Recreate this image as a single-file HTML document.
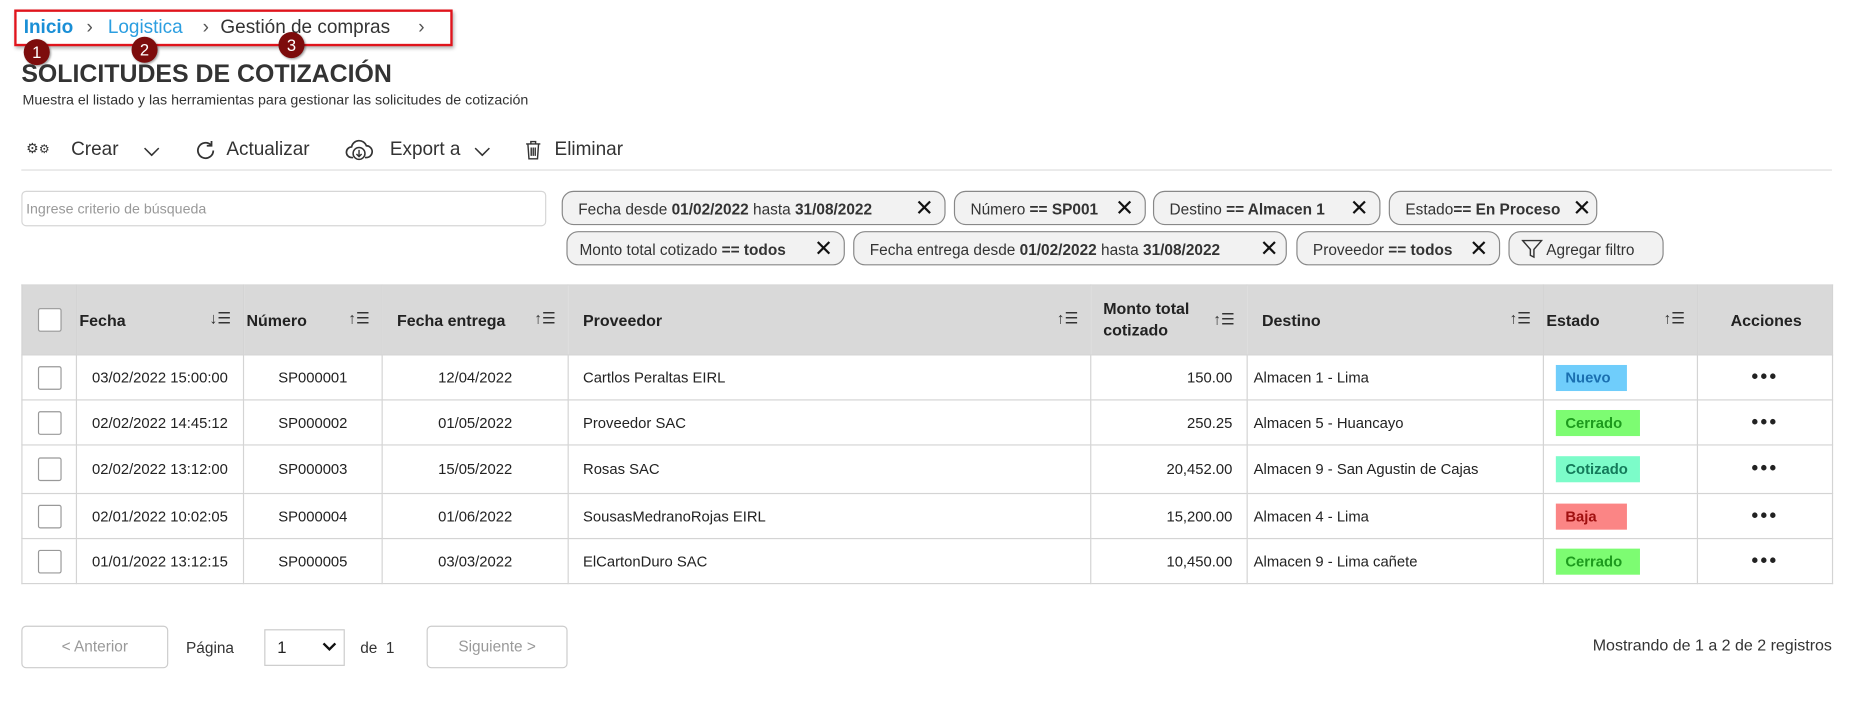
<!DOCTYPE html>
<html><head><meta charset="utf-8"><style>
html,body{margin:0;padding:0;background:#fff;width:1858px;height:704px;overflow:hidden}
#w{position:absolute;left:0;top:0;width:1568px;height:594px;transform:scale(1.18495);transform-origin:0 0;font-family:"Liberation Sans",sans-serif;color:#222}
.a{position:absolute;white-space:nowrap}
.circ{position:absolute;width:22px;height:22px;border-radius:50%;background:#7d0c0c;color:#fff;font-size:14px;text-align:center;line-height:22px;box-shadow:1px 1px 2px rgba(0,0,0,.4)}
.chip{position:absolute;height:29px;border:1px solid #888;border-radius:10px;background:#f2f2f2;font-size:13px;line-height:29px;padding-left:13px;box-sizing:border-box;color:#333}
.chip .x{position:absolute;right:9px;top:0;font-size:19px;color:#111}
table{position:absolute;left:18px;top:240px;border-collapse:collapse;width:1528px;font-size:12.5px;table-layout:fixed}
td,th{border:1.5px solid #d4d4d4;padding:0;overflow:hidden;white-space:nowrap}
th{background:#d9d9d9;height:58px;font-size:13.5px;text-align:left;position:relative;padding-left:2px}
td{height:37px}
.s{position:absolute;right:10px;top:20px;font-size:13px;font-weight:normal;color:#333}
.cb{width:18px;height:18px;border:1px solid #999;background:#fff;margin:auto;border-radius:2px}
.badge{display:inline-block;height:22px;line-height:22px;font-weight:bold;font-size:12.5px;padding-left:8px;box-sizing:border-box}
.btn{position:absolute;border:1px solid #ccc;border-radius:4px;height:36px;box-sizing:border-box;color:#999;font-size:13px;text-align:center;line-height:34px}
.d{text-align:center;font-size:16px;font-weight:bold;letter-spacing:2px}
</style></head><body><div id="w">
<div style="position:absolute;left:12px;top:8px;width:370px;height:31px;border:2px solid #e0141c;box-shadow:1px 2px 3px rgba(0,0,0,.3);box-sizing:border-box"></div>
<div class="a" style="left:20px;top:15px;font-size:16px"><b style="color:#1a8fd6">Inicio</b></div>
<div class="a" style="left:73px;top:15px;font-size:16px;color:#555">›</div>
<div class="a" style="left:91px;top:15px;font-size:16px;color:#2b9ee0">Logistica</div>
<div class="a" style="left:171px;top:15px;font-size:16px;color:#555">›</div>
<div class="a" style="left:186px;top:15px;font-size:16px;color:#333">Gestión de compras</div>
<div class="a" style="left:353px;top:15px;font-size:16px;color:#555">›</div>
<div class="circ" style="left:20px;top:33px">1</div>
<div class="circ" style="left:111px;top:31px">2</div>
<div class="circ" style="left:235px;top:27px">3</div>
<div class="a" style="left:18px;top:51px;font-size:21px;font-weight:bold;color:#333">SOLICITUDES DE COTIZACIÓN</div>
<div class="a" style="left:19px;top:77px;font-size:12px;color:#333">Muestra el listado y las herramientas para gestionar las solicitudes de cotización</div>
<div class="a" style="left:22px;top:118px;font-size:12px;color:#333">⚙<span style="font-size:10px">⚙</span></div>
<div class="a" style="left:60px;top:118px;font-size:16px;color:#333">Crear</div>
<svg style="position:absolute;left:121px;top:124px" width="14" height="8" viewBox="0 0 14 8"><path d="M1 1l6 6 6-6" fill="none" stroke="#333" stroke-width="1.3"/></svg>
<svg style="position:absolute;left:164px;top:117px" width="20" height="20" viewBox="0 0 20 20"><path d="M16 10a6.5 6.5 0 1 1-2-4.7" fill="none" stroke="#333" stroke-width="1.5"/><path d="M14.5 2v4h-4" fill="none" stroke="#333" stroke-width="1.5"/></svg>
<div class="a" style="left:191px;top:118px;font-size:16px;color:#333">Actualizar</div>
<svg style="position:absolute;left:291px;top:117px" width="24" height="19" viewBox="0 0 24 19"><path d="M7 16H6a4.5 4.5 0 0 1-.3-9 6.5 6.5 0 0 1 12.5-1A5 5 0 0 1 18 16h-1" fill="none" stroke="#333" stroke-width="1.4"/><circle cx="12" cy="12.5" r="5" fill="none" stroke="#333" stroke-width="1.3"/><path d="M12 9.5v5.5M9.8 13l2.2 2.2 2.2-2.2" fill="none" stroke="#333" stroke-width="1.2"/></svg>
<div class="a" style="left:329px;top:118px;font-size:16px;color:#333">Export a</div>
<svg style="position:absolute;left:400px;top:124px" width="14" height="8" viewBox="0 0 14 8"><path d="M1 1l6 6 6-6" fill="none" stroke="#333" stroke-width="1.3"/></svg>
<svg style="position:absolute;left:443px;top:118px" width="14" height="17" viewBox="0 0 14 17"><path d="M1 3.5h12M5 3.5V1.5h4v2M2.5 3.5l.9 12.5h7.2l.9-12.5M5.3 6.5v7M7 6.5v7M8.7 6.5v7" fill="none" stroke="#333" stroke-width="1.2"/></svg>
<div class="a" style="left:468px;top:118px;font-size:16px;color:#333">Eliminar</div>
<div style="position:absolute;left:18px;top:143px;width:1528px;height:1px;background:#ddd"></div>
<div style="position:absolute;left:18px;top:161px;width:443px;height:30px;border:1px solid #d6d6d6;border-radius:4px;box-sizing:border-box;font-size:12px;color:#999;line-height:28px;padding-left:3px">Ingrese criterio de búsqueda</div>
<div class="chip" style="left:474px;top:161px;width:324px">Fecha desde <b>01/02/2022</b> hasta <b>31/08/2022</b><span class="x">✕</span></div>
<div class="chip" style="left:805px;top:161px;width:162px">Número <b>== SP001</b><span class="x">✕</span></div>
<div class="chip" style="left:973px;top:161px;width:192px">Destino <b>== Almacen 1</b><span class="x">✕</span></div>
<div class="chip" style="left:1172px;top:161px;width:176px">Estado<b>== En Proceso</b><span class="x" style="right:4px">✕</span></div>
<div class="chip" style="left:478px;top:195px;width:235px;padding-left:10px">Monto total cotizado <b>== todos</b><span class="x">✕</span></div>
<div class="chip" style="left:720px;top:195px;width:366px">Fecha entrega desde <b>01/02/2022</b> hasta <b>31/08/2022</b><span class="x" style="right:6px">✕</span></div>
<div class="chip" style="left:1094px;top:195px;width:172px">Proveedor <b>== todos</b><span class="x">✕</span></div>
<div class="chip" style="left:1273px;top:195px;width:131px;padding-left:10px"><svg style="vertical-align:-4px" width="18" height="18" viewBox="0 0 18 18"><path d="M1 2h16l-6.5 7.5V16l-3-1.5V9.5z" fill="none" stroke="#333" stroke-width="1.2"/></svg> Agregar filtro</div>
<table>
<colgroup><col style="width:46px"><col style="width:141px"><col style="width:117px"><col style="width:157px"><col style="width:441px"><col style="width:132px"><col style="width:250px"><col style="width:130px"><col style="width:114px"></colgroup>
<tr><th style="padding:0"><div class="cb"></div></th>
<th>Fecha<span class="s">↓☰</span></th>
<th>Número<span class="s">↑☰</span></th>
<th style="padding-left:12px">Fecha entrega<span class="s">↑☰</span></th>
<th style="padding-left:12px">Proveedor<span class="s">↑☰</span></th>
<th style="padding-left:10px;line-height:18px">Monto total<br>cotizado<span class="s">↑☰</span></th>
<th style="padding-left:12px">Destino<span class="s">↑☰</span></th>
<th>Estado<span class="s">↑☰</span></th>
<th style="text-align:center">Acciones</th></tr>
<tr><td><div class="cb"></div></td><td style="text-align:center">03/02/2022 15:00:00</td><td style="text-align:center">SP000001</td><td style="text-align:center">12/04/2022</td><td style="padding-left:12px">Cartlos Peraltas EIRL</td><td style="text-align:right;padding-right:12px">150.00</td><td style="padding-left:5px">Almacen 1 - Lima</td><td style="padding-left:10px"><span class="badge" style="background:#6fcdfb;color:#1a6fb0;width:60px">Nuevo</span></td><td class="d">•••</td></tr>
<tr><td><div class="cb"></div></td><td style="text-align:center">02/02/2022 14:45:12</td><td style="text-align:center">SP000002</td><td style="text-align:center">01/05/2022</td><td style="padding-left:12px">Proveedor SAC</td><td style="text-align:right;padding-right:12px">250.25</td><td style="padding-left:5px">Almacen 5 - Huancayo</td><td style="padding-left:10px"><span class="badge" style="background:#7dfc72;color:#1d9a1d;width:71px">Cerrado</span></td><td class="d">•••</td></tr>
<tr><td style="height:40px"><div class="cb"></div></td><td style="text-align:center">02/02/2022 13:12:00</td><td style="text-align:center">SP000003</td><td style="text-align:center">15/05/2022</td><td style="padding-left:12px">Rosas SAC</td><td style="text-align:right;padding-right:12px">20,452.00</td><td style="padding-left:5px">Almacen 9 - San Agustin de Cajas</td><td style="padding-left:10px"><span class="badge" style="background:#7cfcc9;color:#147a5a;width:71px">Cotizado</span></td><td class="d">•••</td></tr>
<tr><td><div class="cb"></div></td><td style="text-align:center">02/01/2022 10:02:05</td><td style="text-align:center">SP000004</td><td style="text-align:center">01/06/2022</td><td style="padding-left:12px">SousasMedranoRojas EIRL</td><td style="text-align:right;padding-right:12px">15,200.00</td><td style="padding-left:5px">Almacen 4 - Lima</td><td style="padding-left:10px"><span class="badge" style="background:#fb8585;color:#a01010;width:60px">Baja</span></td><td class="d">•••</td></tr>
<tr><td style="height:35px"><div class="cb"></div></td><td style="text-align:center">01/01/2022 13:12:15</td><td style="text-align:center">SP000005</td><td style="text-align:center">03/03/2022</td><td style="padding-left:12px">ElCartonDuro SAC</td><td style="text-align:right;padding-right:12px">10,450.00</td><td style="padding-left:5px">Almacen 9 - Lima cañete</td><td style="padding-left:10px"><span class="badge" style="background:#7dfc72;color:#1d9a1d;width:71px">Cerrado</span></td><td class="d">•••</td></tr>
</table>
<div class="btn" style="left:18px;top:528px;width:124px">&lt; Anterior</div>
<div class="a" style="left:157px;top:539px;font-size:13px;color:#333">Página</div>
<div style="position:absolute;left:223px;top:531px;width:68px;height:31px;border:1px solid #ccc;box-sizing:border-box;font-size:14px;line-height:29px;padding-left:10px">1<svg style="position:absolute;right:6px;top:10px" width="12" height="8" viewBox="0 0 12 8"><path d="M1 1l5 5 5-5" fill="none" stroke="#111" stroke-width="2"/></svg></div>
<div class="a" style="left:304px;top:539px;font-size:13px;color:#333">de &nbsp;1</div>
<div class="btn" style="left:360px;top:528px;width:119px">Siguiente &gt;</div>
<div class="a" style="right:22px;top:537px;font-size:13.5px;color:#333">Mostrando de 1 a 2 de 2 registros</div>
</div></body></html>
